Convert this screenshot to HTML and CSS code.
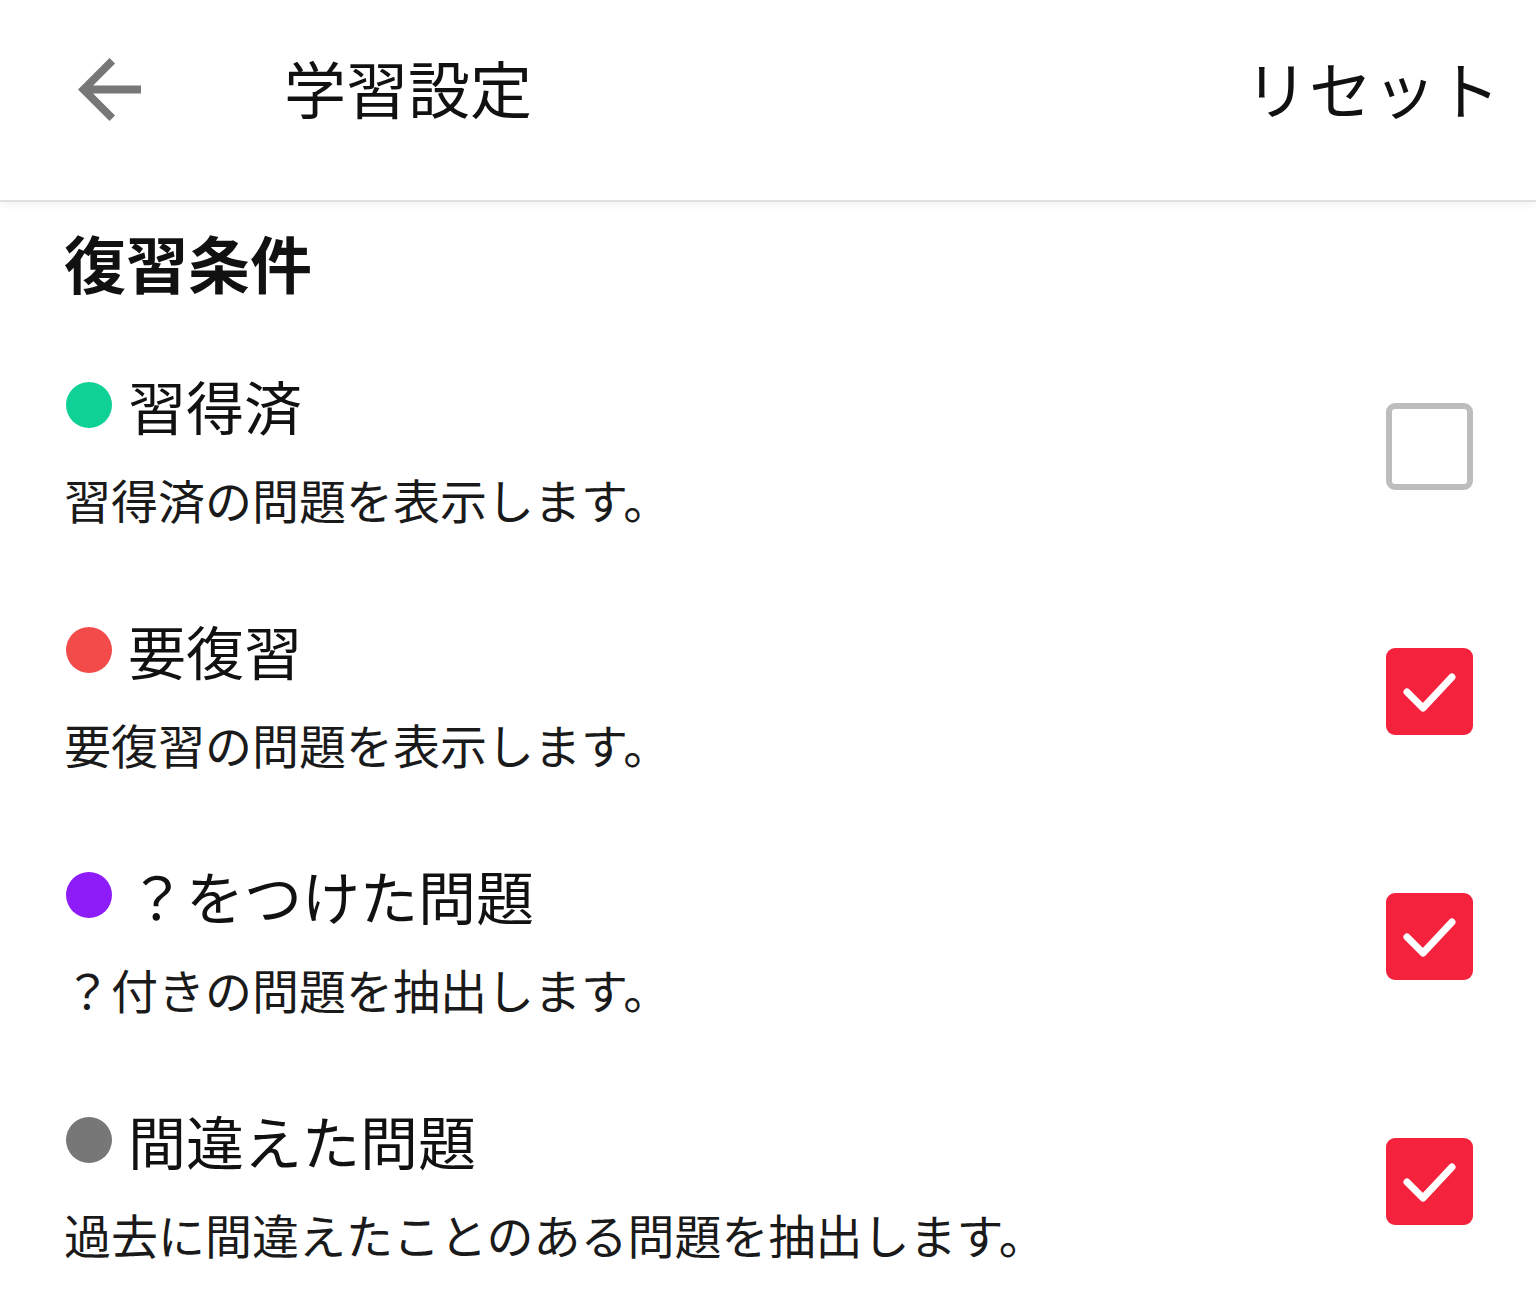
FILE: index.html
```html
<!DOCTYPE html>
<html lang="ja">
<head>
  <meta charset="UTF-8">
  <meta name="viewport" content="width=device-width, initial-scale=1.0">
  <title>学習設定</title>
  <link rel="stylesheet" href="styles.css">
</head>
<body>
  <header class="app-header">
    <a href="#" class="back-btn" aria-label="戻る">
      <svg viewBox="4 4 16 16" width="63" height="63">
        <path d="M20 11H7.83l5.59-5.59L12 4l-8 8 8 8 1.41-1.41L7.83 13H20v-2z" fill="#777"/>
      </svg>
    </a>
    <h1 class="app-title">学習設定</h1>
    <a href="#" class="reset-btn">リセット</a>
  </header>

  <main class="settings">
    <h2 class="section-title">復習条件</h2>

    <div class="setting-item">
      <div class="setting-text">
        <div class="setting-label"><span class="dot dot-green"></span>習得済</div>
        <p class="setting-desc">習得済の問題を表示します。</p>
      </div>
      <span class="checkbox"></span>
    </div>

    <div class="setting-item">
      <div class="setting-text">
        <div class="setting-label"><span class="dot dot-red"></span>要復習</div>
        <p class="setting-desc">要復習の問題を表示します。</p>
      </div>
      <span class="checkbox checked">
        <svg viewBox="0 0 87 87"><polyline points="21,44 37,60 66,29"/></svg>
      </span>
    </div>

    <div class="setting-item">
      <div class="setting-text">
        <div class="setting-label"><span class="dot dot-purple"></span>？をつけた問題</div>
        <p class="setting-desc">？付きの問題を抽出します。</p>
      </div>
      <span class="checkbox checked">
        <svg viewBox="0 0 87 87"><polyline points="21,44 37,60 66,29"/></svg>
      </span>
    </div>

    <div class="setting-item">
      <div class="setting-text">
        <div class="setting-label"><span class="dot dot-grey"></span>間違えた問題</div>
        <p class="setting-desc">過去に間違えたことのある問題を抽出します。</p>
      </div>
      <span class="checkbox checked">
        <svg viewBox="0 0 87 87"><polyline points="21,44 37,60 66,29"/></svg>
      </span>
    </div>
  </main>
</body>
</html>
```

FILE: styles.css
```css
* {
  margin: 0;
  padding: 0;
  box-sizing: border-box;
}

body {
  font-family: "Noto Sans CJK JP", "Noto Sans", sans-serif;
  background: #fff;
  color: #111;
  width: 1536px;
  height: 1316px;
  overflow: hidden;
}

a {
  color: inherit;
  text-decoration: none;
}

/* Header */
.app-header {
  height: 202px;
  display: flex;
  align-items: center;
  padding: 0 35px 26px 78px;
  border-bottom: 2px solid #e0e0e0;
  box-shadow: 0 3px 8px rgba(0, 0, 0, 0.05);
}

.back-btn {
  display: flex;
  width: 63px;
  height: 63px;
  margin-top: 4px;
}

.app-title {
  font-size: 62px;
  font-weight: 400;
  line-height: 80px;
  margin-left: 143px;
  flex: 1;
}

.reset-btn {
  font-size: 63px;
  line-height: 80px;
  letter-spacing: 1px;
}

/* Settings */
.settings {
  padding: 20px 63px 0 64px;
}

.section-title {
  font-size: 62px;
  font-weight: 700;
  line-height: 80px;
  margin-bottom: 25px;
}

.setting-item {
  height: 245px;
  display: flex;
  align-items: center;
  justify-content: space-between;
}

.setting-label {
  display: flex;
  align-items: center;
  font-size: 58px;
  line-height: 70px;
}

.dot {
  width: 46px;
  height: 46px;
  border-radius: 50%;
  margin: 0 16px 0 2px;
}

.dot-green { background: #0fd196; }
.dot-red { background: #f34a4a; }
.dot-purple { background: #8d1cf8; }
.dot-grey { background: #777; }

.setting-desc {
  font-size: 47px;
  line-height: 60px;
  margin-top: 29px;
  color: #1a1a1a;
}

.checkbox {
  width: 87px;
  height: 87px;
  margin-bottom: 6px;
  border: 6px solid #bdbdbd;
  border-radius: 9px;
  flex-shrink: 0;
}

.checkbox.checked {
  border: none;
  background: #f5223e;
}

.checkbox svg {
  display: block;
  width: 87px;
  height: 87px;
}

.checkbox polyline {
  fill: none;
  stroke: #fff;
  stroke-width: 7;
  stroke-linecap: round;
  stroke-linejoin: round;
}
```
